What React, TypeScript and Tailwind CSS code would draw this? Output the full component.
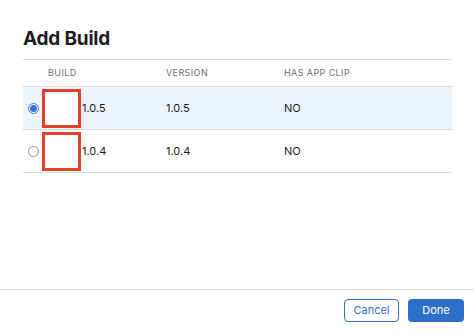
import React from "react";

type Build = { build: string; version: string; clip: string };

const builds: Build[] = [
  { build: "1.0.5", version: "1.0.5", clip: "NO" },
  { build: "1.0.4", version: "1.0.4", clip: "NO" },
];

function Radio({ checked }: { checked: boolean }) {
  if (checked) {
    return (
      <span className="flex h-[11px] w-[11px] items-center justify-center rounded-full border border-[#3b7be0] bg-white">
        <span className="h-[7px] w-[7px] rounded-full bg-[#2f6fe0]" />
      </span>
    );
  }
  return <span className="block h-[11px] w-[11px] rounded-full border border-[#8e8e93] bg-white" />;
}

export default function App() {
  const selected = 0;
  return (
    <div
      className="flex h-[331px] w-[474px] flex-col bg-white text-[#1d1d1f]"
      style={{ fontFamily: "Inter, 'Liberation Sans', sans-serif" }}
    >
      {/* Title */}
      <div className="px-[23px] pt-[27px] pb-[9px]">
        <h1 className="text-[19px] font-bold leading-[23px] tracking-[-0.2px]">Add Build</h1>
      </div>

      {/* Table */}
      <div className="mx-[23px] mr-[22px] border-t border-[#dcdde0]">
        <div className="grid h-[27px] grid-cols-[19px_124px_118px_1fr] items-center border-b border-[#dcdde0] text-[9px] tracking-[0.4px] text-[#6e6e73]">
          <div />
          <div className="pl-[6px]">BUILD</div>
          <div>VERSION</div>
          <div>HAS APP CLIP</div>
        </div>
        {builds.map((b, i) => (
          <div
            key={b.build}
            className={
              "grid h-[43px] grid-cols-[19px_124px_118px_1fr] items-center border-b border-[#dcdde0] text-[11px] " +
              (i === selected ? "bg-[#edf3fb]" : "bg-white")
            }
          >
            <div className="flex justify-center pl-[2px]">
              <Radio checked={i === selected} />
            </div>
            <div className="flex items-center">
              <span className="block h-[39px] w-[39px] border-[3px] border-[#e2412b] bg-white" />
              <span className="ml-[1px]">{b.build}</span>
            </div>
            <div>{b.version}</div>
            <div>{b.clip}</div>
          </div>
        ))}
      </div>

      <div className="flex-1" />

      {/* Footer */}
      <div className="flex h-[42px] items-center justify-end gap-[9px] border-t border-[#dcdde0] pr-[10px]">
        <button className="h-[23px] w-[55px] rounded-[4px] border border-[#2f6fc9] bg-white text-[11px] text-[#2f6fc9]">
          Cancel
        </button>
        <button className="h-[23px] w-[56px] rounded-[4px] bg-[#2f6fc9] text-[11px] text-white">
          Done
        </button>
      </div>
    </div>
  );
}
